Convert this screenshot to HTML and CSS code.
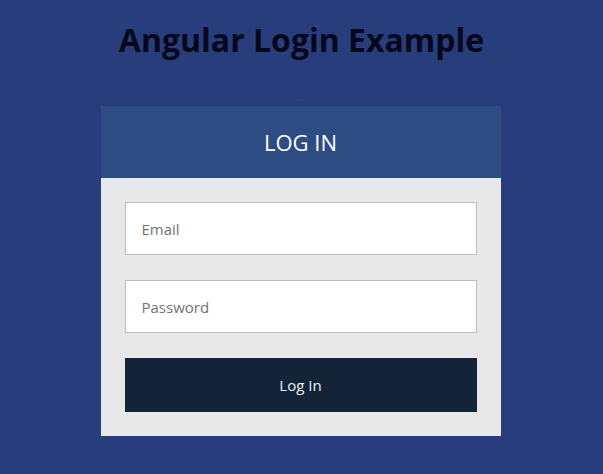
FILE: index.html
```html
<!DOCTYPE html>
<html lang="en">
  <head>
    <meta charset="UTF-8" />
    <meta name="viewport" content="width=device-width, initial-scale=1.0" />
    <title>Angular Login Example</title>
    <link rel="stylesheet" href="styles.css">
  </head>
  <body>
    <h1 class="page-title">Angular Login Example</h1>

    <div class="login-card">
      <div class="login-header">LOG IN</div>
      <form class="login-form">
        <input type="email" class="login-input" placeholder="Email" />
        <input type="password" class="login-input" placeholder="Password" />
        <button type="button" class="login-btn">Log In</button>
      </form>
    </div>
  </body>
</html>
```

FILE: styles.css
```css
body {
  margin: 0;
  background: #283d7c;
  font-family: "Open Sans", Arial, sans-serif;
}
.page-title {
  margin: 18px 0 45px;
  text-align: center;
  font-size: 32px;
  font-weight: 700;
  line-height: normal;
  color: #04081a;
}
.login-card {
  position: relative;
  width: 400px;
  margin: 0 auto;
  left: -1px;
}
/* little arrow sitting on top of the header */
.login-card::before {
  content: "";
  position: absolute;
  top: -9px;
  left: 50%;
  margin-left: -6px;
  border: 6px solid transparent;
  border-bottom: 4px solid #2a4479;
  border-top: 0;
}
.login-header {
  height: 72px;
  line-height: 72px;
  background: #2d4c83;
  color: #fff;
  text-align: center;
  font-size: 22px;
}
.login-form {
  display: flex;
  flex-direction: column;
  gap: 25px;
  padding: 24px;
  background: #e8e8e8;
}
.login-input {
  box-sizing: border-box;
  height: 53px;
  padding: 0 16px;
  border: 1px solid #bcbcbc;
  background: #fff;
  font-family: inherit;
  font-size: 15px;
  color: #333;
  outline: none;
}
.login-input::placeholder {
  color: #737373;
}
.login-btn {
  height: 54px;
  border: none;
  background: #132338;
  color: #f0f0f0;
  font-family: inherit;
  font-size: 15px;
  cursor: pointer;
}
```
